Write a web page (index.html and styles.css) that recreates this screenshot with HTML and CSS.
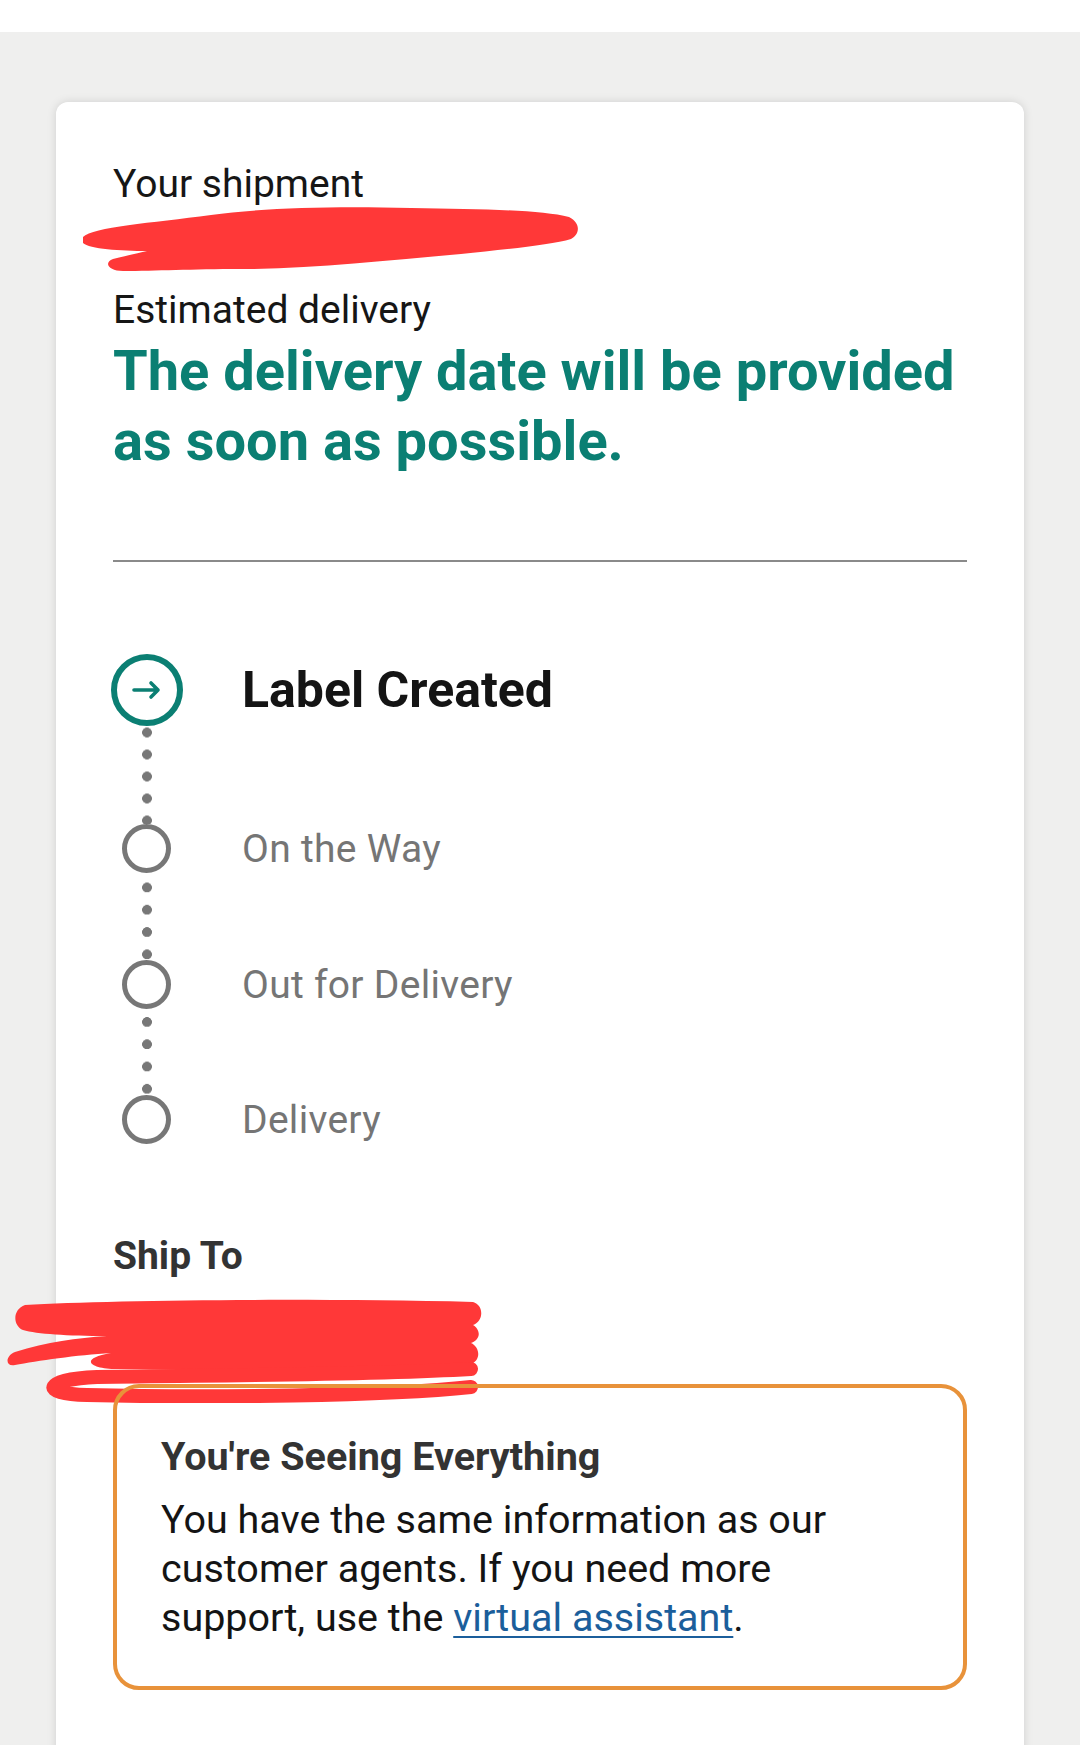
FILE: index.html
```html
<!DOCTYPE html>
<html lang="en">
<head>
<meta charset="utf-8">
<title>Your shipment</title>
<link rel="stylesheet" href="styles.css">
</head>
<body>
<div class="topbar"></div>
<main class="page">
  <section class="card">
    <p class="eyebrow">Your shipment</p>
    <div class="redact redact-tracking">
      <span class="hidden-text">Tracking number</span>
      <svg class="scribble scribble-1" width="500" height="72" viewBox="0 0 500 72" aria-hidden="true">
        <path d="M2,34 C12,24 70,20 130,12 C180,5 250,3 330,5 C400,6 460,7 488,14 C500,20 499,31 490,36 C470,42 420,47 380,51 C300,58 230,66 160,66 C110,66 75,68 42,68 C28,68 22,60 32,56 C48,52 58,50 66,48 C40,48 8,46 2,40 Z" fill="#ff3838"/>
      </svg>
    </div>
    <p class="eyebrow">Estimated delivery</p>
    <h1 class="eta">The delivery date will be provided as soon as possible.</h1>
    <hr class="divider">

    <div class="timeline">
      <div class="step step-current">
        <div class="marker">
          <span class="ring ring-active">
            <svg width="30" height="20" viewBox="0 0 30 20" aria-hidden="true">
              <path d="M2,10 H26 M19,3 L26,10 L19,17" fill="none" stroke="#0b7f73" stroke-width="3.6" stroke-linecap="round" stroke-linejoin="round"/>
            </svg>
          </span>
        </div>
        <span class="step-label label-current">Label Created</span>
      </div>
      <div class="connector connector-first"></div>
      <div class="step">
        <div class="marker"><span class="ring"></span></div>
        <span class="step-label">On the Way</span>
      </div>
      <div class="connector connector-mid"></div>
      <div class="step">
        <div class="marker"><span class="ring"></span></div>
        <span class="step-label">Out for Delivery</span>
      </div>
      <div class="connector connector-last"></div>
      <div class="step">
        <div class="marker"><span class="ring"></span></div>
        <span class="step-label">Delivery</span>
      </div>
    </div>

    <h2 class="ship-to">Ship To</h2>
    <div class="redact redact-address">
      <span class="hidden-text">Address</span>
      <svg class="scribble scribble-2" width="480" height="104" viewBox="0 0 480 104" aria-hidden="true">
        <path d="M18,6 C100,1 300,-1 466,3 C477,6 477,22 466,26 C473,30 475,40 464,44 C473,48 475,62 462,66 C350,70 220,72 110,70 C84,70 70,60 104,54 C70,56 30,62 8,66 C-2,68 -2,57 8,53 C40,43 70,39 100,37 C60,37 30,35 16,31 C5,26 6,10 18,6 Z" fill="#ff3838"/>
        <path d="M464,70 C360,76 220,76 90,78 C38,80 30,95 80,96 C200,99 380,97 464,88" fill="none" stroke="#ff3838" stroke-width="14" stroke-linecap="round"/>
      </svg>
    </div>

    <div class="notice">
      <h3 class="notice-title">You're Seeing Everything</h3>
      <p class="notice-text">You have the same information as our customer agents. If you need more support, use the <a class="notice-link" href="#">virtual assistant</a>.</p>
    </div>
  </section>
</main>
</body>
</html>
```

FILE: styles.css
```css
* {
  box-sizing: border-box;
}

html, body {
  margin: 0;
  padding: 0;
}

body {
  background: #efefee;
  font-family: Roboto, "Liberation Sans", Arial, sans-serif;
  color: #161616;
}

.topbar {
  height: 32px;
  background: #ffffff;
}

.page {
  padding: 70px 56px 0;
}

.card {
  background: #ffffff;
  border-radius: 12px;
  box-shadow: 0 0 10px rgba(0, 0, 0, 0.13);
  padding: 60px 57px 140px;
}

.eyebrow {
  margin: 0;
  font-size: 39px;
  line-height: 45px;
  font-weight: 400;
  color: #161616;
}

.redact {
  position: relative;
}

.redact-tracking {
  height: 81px;
}

.redact-address {
  height: 105px;
}

.hidden-text {
  display: block;
  padding-top: 14px;
  font-size: 36px;
  color: #222;
  visibility: hidden;
}

.scribble {
  position: absolute;
  display: block;
}

.scribble-1 {
  top: -4px;
  left: -32px;
}

.scribble-2 {
  top: 20px;
  left: -106px;
}

.eta {
  margin: 3px 0 0;
  font-size: 56px;
  line-height: 70px;
  font-weight: 700;
  color: #0b7f73;
}

.divider {
  margin: 84px 0 0;
  border: 0;
  height: 2px;
  background: #8a8a8a;
}

.timeline {
  margin-top: 92px;
  display: flex;
  flex-direction: column;
}

.step {
  display: flex;
  align-items: center;
  height: 49px;
}

.step-current {
  height: 72px;
}

.marker {
  width: 67px;
  flex: none;
  display: flex;
  justify-content: center;
  align-items: center;
}

.ring {
  position: relative;
  z-index: 1;
  display: flex;
  align-items: center;
  justify-content: center;
  width: 49px;
  height: 49px;
  border: 5px solid #777777;
  border-radius: 50%;
  background: transparent;
  flex: none;
}

.ring-active {
  width: 72px;
  height: 72px;
  border: 6.5px solid #0b7f73;
  background: #ffffff;
}

.step-label {
  margin-left: 62px;
  font-size: 39px;
  letter-spacing: 0.3px;
  line-height: 49px;
  padding-top: 3px;
  color: #757575;
  white-space: nowrap;
}

.label-current {
  font-size: 50px;
  letter-spacing: 0;
  line-height: 72px;
  padding-top: 0;
  font-weight: 700;
  color: #141414;
}

.connector {
  width: 67px;
  background-image: radial-gradient(circle at 5px 5px, #777777 4.6px, rgba(119, 119, 119, 0) 5.2px);
  background-repeat: repeat-y;
}

.connector-first {
  height: 97.5px;
  background-size: 10px 22px;
  background-position: 28.5px 1.5px;
}

.connector-mid {
  height: 87px;
  background-size: 10px 22.3px;
  background-position: 28.5px 9.5px;
}

.connector-last {
  height: 86px;
  background-size: 10px 22.3px;
  background-position: 28.5px 8px;
}

.ship-to {
  margin: 90px 0 0;
  font-size: 39px;
  line-height: 45px;
  font-weight: 700;
  color: #333333;
}

.notice {
  position: relative;
  border: 4px solid #e8923a;
  border-radius: 26px;
  padding: 46px 80px 44px 44px;
}

.notice-title {
  margin: 0;
  font-size: 39.5px;
  line-height: 45px;
  font-weight: 700;
  color: #333333;
}

.notice-text {
  margin: 16px 0 0;
  font-size: 39.5px;
  line-height: 49px;
  color: #141414;
}

.notice-link {
  color: #1b5e9b;
  text-decoration: underline;
  text-underline-offset: 5px;
  text-decoration-thickness: 2px;
}
```
